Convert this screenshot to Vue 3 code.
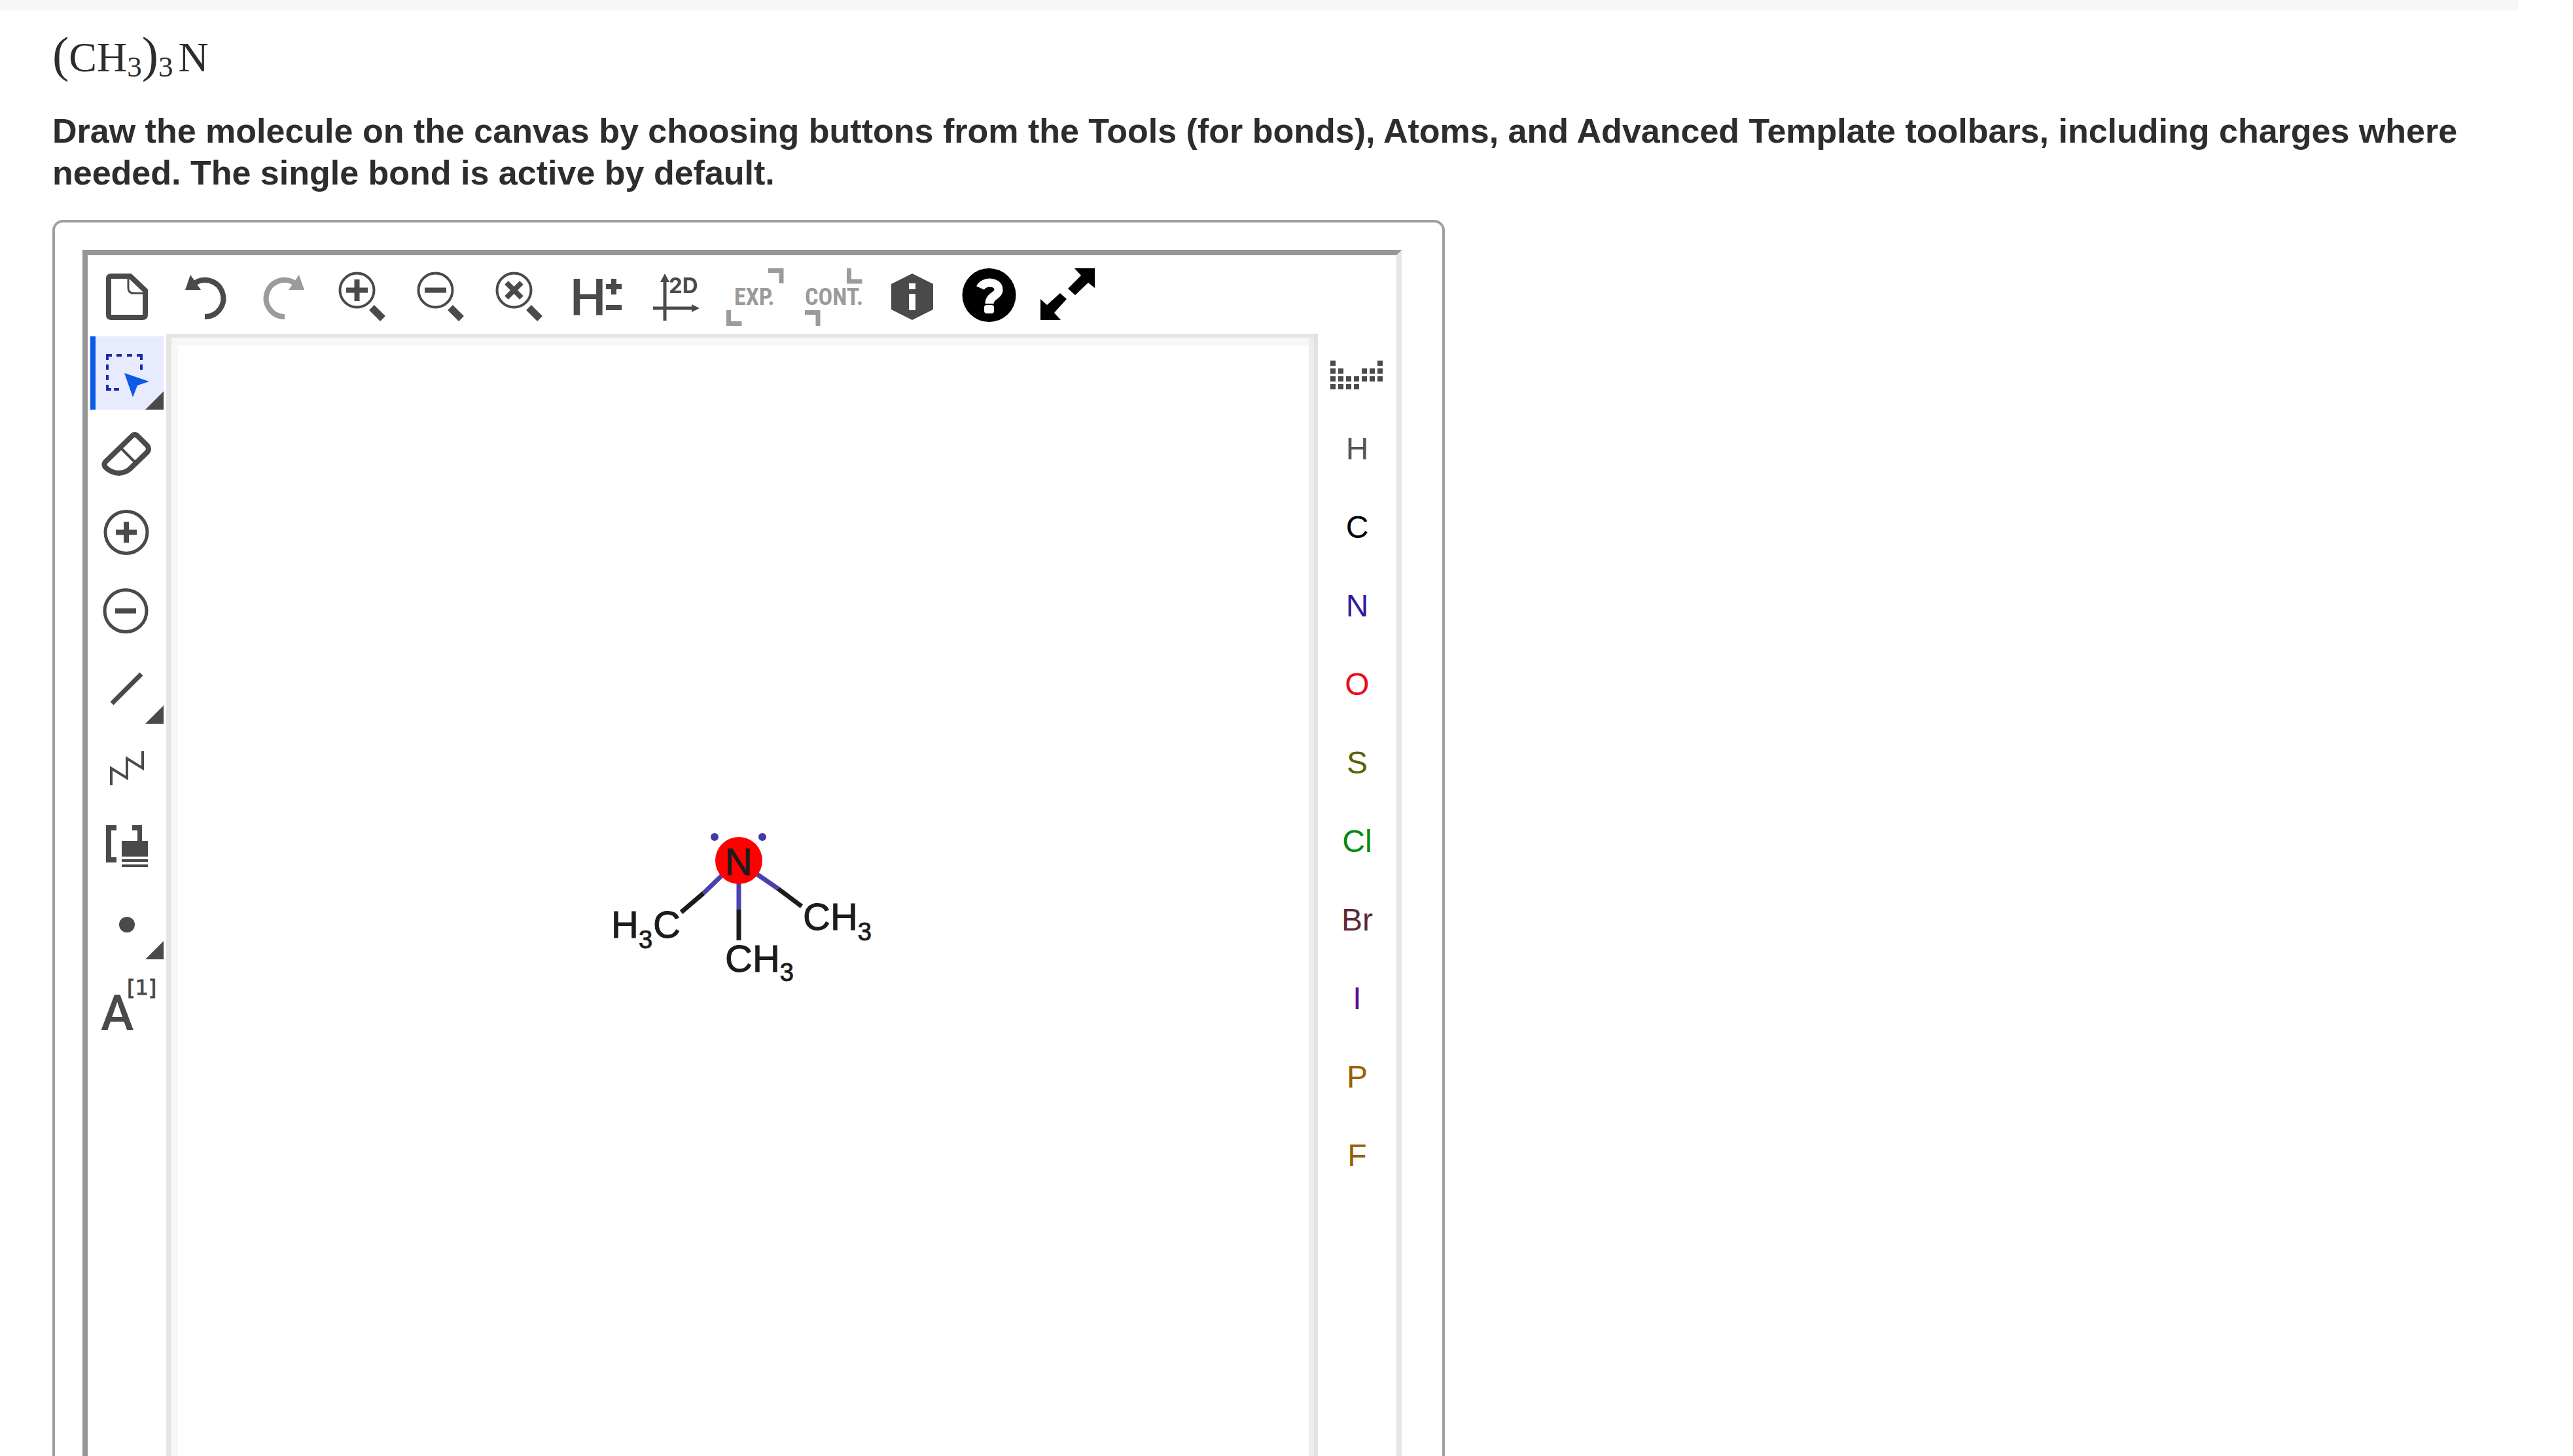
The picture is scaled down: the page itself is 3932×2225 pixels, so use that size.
<script setup>
import { ref } from 'vue'

const activeTool = ref('select')

const atoms = [
  { symbol: 'H', color: '#555555' },
  { symbol: 'C', color: '#000000' },
  { symbol: 'N', color: '#2a1ba5' },
  { symbol: 'O', color: '#e60f1a' },
  { symbol: 'S', color: '#5a6400' },
  { symbol: 'Cl', color: '#008a12' },
  { symbol: 'Br', color: '#5a2a38' },
  { symbol: 'I', color: '#5c0c90' },
  { symbol: 'P', color: '#996300' },
  { symbol: 'F', color: '#946200' }
]

// filled cells of the periodic table icon, row by row
const tableCells = [
  [0, 6],
  [0, 1, 4, 5, 6],
  [0, 1, 2, 3, 4, 5, 6],
  [0, 1, 2, 3]
]
</script>

<template>
  <div class="page">
    <div class="top-strip"></div>

    <main class="question">
      <p class="formula">
        <span class="paren">(</span>CH<sub>3</sub><span class="paren close">)</span><sub>3</sub><span class="last">N</span>
      </p>
      <p class="prompt">
        Draw the molecule on the canvas by choosing buttons from the Tools (for bonds), Atoms, and Advanced Template toolbars, including charges where needed. The single bond is active by default.
      </p>

      <section class="editor">
        <div class="frame">
          <!-- Top toolbar -->
          <div class="toolbar">
            <button type="button" aria-label="New">
              <svg viewBox="0 0 112 112">
                <path class="line" stroke-width="8" d="M32 28h29l23 22v37q0 4-4 4H32q-4 0-4-4V32q0-4 4-4z" />
                <path class="line" stroke-width="3" d="M58 28v18q0 8 8 8h18" />
              </svg>
            </button>
            <button type="button" aria-label="Undo">
              <svg viewBox="0 0 112 112">
                <path class="line" stroke-width="8" d="M38 40A28 28 0 1 1 55 90" />
                <path class="fill" d="M33 26L25 49H49z" />
              </svg>
            </button>
            <button type="button" aria-label="Redo" class="muted">
              <svg viewBox="0 0 112 112">
                <path class="line" stroke-width="8" d="M74 40A28 28 0 1 0 57 90" />
                <path class="fill" d="M79 26L87 49H63z" />
              </svg>
            </button>
            <button type="button" aria-label="Zoom in">
              <svg viewBox="0 0 112 112">
                <circle class="line" stroke-width="4" cx="47.5" cy="49.5" r="26" />
                <path class="line" stroke-width="8" d="M31 49.5h33M47.5 33v33" />
                <path class="line" stroke-width="11" d="M70 76L87 93" />
              </svg>
            </button>
            <button type="button" aria-label="Zoom out">
              <svg viewBox="0 0 112 112">
                <circle class="line" stroke-width="4" cx="47.5" cy="49.5" r="26" />
                <path class="line" stroke-width="8" d="M31 49.5h33" />
                <path class="line" stroke-width="11" d="M70 76L87 93" />
              </svg>
            </button>
            <button type="button" aria-label="Zoom reset">
              <svg viewBox="0 0 112 112">
                <circle class="line" stroke-width="4" cx="47.5" cy="49.5" r="26" />
                <path class="line" stroke-width="8" d="M36 38L59 61M59 38L36 61" />
                <path class="line" stroke-width="11" d="M70 76L87 93" />
              </svg>
            </button>
            <button type="button" aria-label="Toggle hydrogens">
              <svg viewBox="0 0 112 112">
                <text class="icon-text" x="13" y="88" font-size="78" font-weight="500">H</text>
                <path class="line" stroke-width="8" d="M68 44h24M80 32v24M68 76h24" />
              </svg>
            </button>
            <button type="button" aria-label="Clean 2D">
              <svg viewBox="0 0 112 112">
                <path class="line" stroke-width="5" d="M38 34v62M20 77h62" />
                <path class="fill" d="M38 24l7 13H31zM91 77l-12 6V71z" />
                <text class="icon-text inter" x="44" y="54" font-size="33" font-weight="700">2D</text>
              </svg>
            </button>
            <button type="button" aria-label="Expand groups" class="muted">
              <svg viewBox="0 0 112 112">
                <path class="line" stroke-width="7" d="M76 19.5h20V39M15.5 80v20.5h20" />
                <text class="icon-text narrow" x="24" y="72" font-size="36" font-weight="700">EXP.</text>
              </svg>
            </button>
            <button type="button" aria-label="Contract groups" class="muted">
              <svg viewBox="0 0 112 112">
                <path class="line" stroke-width="7" d="M79.5 16v20h20M12 83.5h20V104" />
                <text class="icon-text narrow" x="12" y="72" font-size="36" font-weight="700">CONT.</text>
              </svg>
            </button>
            <button type="button" aria-label="About">
              <svg viewBox="0 0 112 112">
                <path class="fill" d="M56 24L88 40V79L56 95L24 79V40z" />
                <path fill="#ffffff" d="M51 39h10v9H51zM51 55h10v25H51z" />
              </svg>
            </button>
            <button type="button" aria-label="Help">
              <svg viewBox="0 0 112 112">
                <circle cx="53.5" cy="57" r="41" fill="#000000" />
                <path fill="none" stroke="#ffffff" stroke-width="13" d="M40 46C45 35 68 35 68 49C68 58 54 58 54 70" />
                <rect x="46" y="72" width="15" height="13" rx="4" fill="#ffffff" />
              </svg>
            </button>
            <button type="button" aria-label="Fullscreen">
              <svg viewBox="0 0 112 112">
                <path d="M64 16H95V46L85 38L65 57L54 47L74 27z" fill="#000000" />
                <path d="M43 95H12V63L22 72L42 54L52 63L33 84z" fill="#000000" />
              </svg>
            </button>
          </div>

          <div class="workspace">
            <!-- Left toolbar -->
            <div class="side">
              <button type="button" aria-label="Selection" :class="{ active: activeTool === 'select' }" @click="activeTool = 'select'">
                <svg viewBox="0 0 112 112">
                  <path fill="none" stroke="#1b2bb0" stroke-width="4" d="M26 36v-7h7M40 29h8M56 29h8M71 29h7v7M78 43v8M26 43v8M26 59v8M26 74v7h6M36 81h8" />
                  <path fill="#0b5be8" d="M52 56L90 69L72 75L65 93z" />
                  <path class="fill" d="M84 112H112V84z" />
                </svg>
              </button>
              <button type="button" aria-label="Erase" :class="{ active: activeTool === 'erase' }" @click="activeTool = 'erase'">
                <svg viewBox="0 0 112 112">
                  <path class="line" stroke-width="8" d="M64 32L23 72Q20 76 23 80Q32 89 44 89Q54 88 60 83L87 57Q91 52 87 47L73 33Q68 28 64 32z" />
                  <path class="line" stroke-width="4" d="M46 50L69 73" />
                </svg>
              </button>
              <button type="button" aria-label="Increase charge" :class="{ active: activeTool === 'plus' }" @click="activeTool = 'plus'">
                <svg viewBox="0 0 112 112">
                  <circle class="line" stroke-width="5" cx="55" cy="59.5" r="32" />
                  <path class="line" stroke-width="8" d="M39 59.5h32M55 43.5v32" />
                </svg>
              </button>
              <button type="button" aria-label="Decrease charge" :class="{ active: activeTool === 'minus' }" @click="activeTool = 'minus'">
                <svg viewBox="0 0 112 112">
                  <circle class="line" stroke-width="5" cx="54" cy="59.5" r="32" />
                  <path class="line" stroke-width="8" d="M38 59.5h32" />
                </svg>
              </button>
              <button type="button" aria-label="Single bond" :class="{ active: activeTool === 'bond' }" @click="activeTool = 'bond'">
                <svg viewBox="0 0 112 112">
                  <path class="line" stroke-width="7" d="M33 81L78 36" />
                  <path class="fill" d="M84 112H112V84z" />
                </svg>
              </button>
              <button type="button" aria-label="Chain" :class="{ active: activeTool === 'chain' }" @click="activeTool = 'chain'">
                <svg viewBox="0 0 112 112">
                  <path class="line" stroke-width="4" d="M32 86V60L56 75V45L80 60V34" />
                </svg>
              </button>
              <button type="button" aria-label="Group template" :class="{ active: activeTool === 'group' }" @click="activeTool = 'group'">
                <svg viewBox="0 0 112 112">
                  <path class="fill" d="M24 27h16v8h-8v41h8v8H24zM64 27h15v24h9v24H48V51h24V35h-8zM48 79h40v4H48zM48 87h40v4H48z" />
                </svg>
              </button>
              <button type="button" aria-label="Radical" :class="{ active: activeTool === 'radical' }" @click="activeTool = 'radical'">
                <svg viewBox="0 0 112 112">
                  <circle class="fill" cx="56" cy="59" r="12" />
                  <path class="fill" d="M84 112H112V84z" />
                </svg>
              </button>
              <button type="button" aria-label="Atom map" :class="{ active: activeTool === 'map' }" @click="activeTool = 'map'">
                <svg viewBox="0 0 112 112">
                  <text class="icon-text" x="16" y="100" font-size="76" font-weight="500">A</text>
                  <text class="icon-text dejavu" x="56" y="46" font-size="32">[1]</text>
                </svg>
              </button>
            </div>

            <!-- Drawing canvas -->
            <div class="canvas">
              <svg class="molecule" viewBox="0 0 460 290">
                <g fill="none" stroke-width="7">
                  <path stroke="#4b40b0" d="M203 98L175 125M229 108V150M257 96L289 118" />
                  <path stroke="#1c1c1c" d="M175 125L141 154M229 150V197M289 118L325 145" />
                </g>
                <circle cx="229" cy="75" r="36" fill="#ff0000" />
                <circle cx="192" cy="39" r="6" fill="#4438a8" />
                <circle cx="265" cy="39" r="6" fill="#4438a8" />
                <g class="atom-text">
                  <text x="229" y="97" text-anchor="middle">N</text>
                  <text x="34" y="193">H<tspan class="sub" dy="16">3</tspan></text>
                  <text x="98" y="193">C</text>
                  <text x="208" y="245">CH<tspan class="sub" dy="14">3</tspan></text>
                  <text x="327" y="181">CH<tspan class="sub" dy="16">3</tspan></text>
                </g>
              </svg>
            </div>

            <!-- Atoms toolbar -->
            <div class="side">
              <button type="button" aria-label="Periodic table">
                <svg viewBox="0 0 112 112">
                  <template v-for="(row, y) in tableCells" :key="y">
                    <rect v-for="x in row" :key="x" class="fill" :x="15 + x * 12" :y="37 + y * 12" width="8" height="8" />
                  </template>
                </svg>
              </button>
              <button v-for="atom in atoms" :key="atom.symbol" type="button" class="atom" :style="{ color: atom.color }">
                {{ atom.symbol }}
              </button>
            </div>
          </div>
        </div>
      </section>
    </main>
  </div>
</template>

<style>
body {
  margin: 0;
  background: #ffffff;
}
</style>

<style scoped>
.page {
  display: flex;
  flex-direction: column;
  height: 100vh;
  margin-right: 84px;
  overflow: hidden;
  font-family: 'Liberation Sans', Arial, sans-serif;
  color: #2d2d2d;
}

.top-strip {
  flex: none;
  height: 16px;
  background: #f7f7f7;
}

.question {
  display: flex;
  flex-direction: column;
  flex: 1;
  gap: 40px;
  min-height: 0;
  padding: 32px 80px 0;
}

.formula {
  margin: 0;
  font-family: 'Liberation Serif', 'Times New Roman', serif;
  font-size: 64px;
  line-height: 80px;
}

.formula sub {
  font-size: 45px;
  line-height: 0;
  vertical-align: -8px;
}

.paren {
  font-size: 76px;
  line-height: 0;
}

.last {
  margin-left: 8px;
}

.prompt {
  margin: 0;
  font-size: 52px;
  font-weight: 700;
  line-height: 64px;
}

.editor {
  display: flex;
  flex: 1;
  box-sizing: border-box;
  width: 100%;
  max-width: 2128px;
  min-height: 0;
  padding: 42px 62px 0 42px;
  border: 4px solid #a0a0a0;
  border-bottom: 0;
  border-radius: 16px 16px 0 0;
}

.frame {
  display: flex;
  flex-direction: column;
  flex: 1;
  min-width: 0;
  border: 8px solid;
  border-color: #979797 #e6e6e6 #979797 #979797;
  border-bottom: 0;
}

.toolbar {
  display: flex;
  gap: 8px;
  padding: 4px;
}

.workspace {
  display: flex;
  flex: 1;
  min-height: 0;
}

.side {
  display: flex;
  flex-direction: column;
  gap: 8px;
  padding: 4px;
}

button {
  flex: none;
  width: 112px;
  height: 112px;
  padding: 0;
  border: 0;
  background: none;
  font-family: inherit;
  cursor: pointer;
}

button svg {
  display: block;
  width: 112px;
  height: 112px;
  overflow: visible;
}

button.active {
  background: #e8ebfd;
  box-shadow: inset 8px 0 0 #0b5be8;
}

.line {
  fill: none;
  stroke: #4a4a4a;
}

.fill {
  fill: #4a4a4a;
}

.icon-text {
  fill: #4a4a4a;
  font-family: Roboto, sans-serif;
}

.inter {
  font-family: Inter, sans-serif;
}

.narrow {
  font-family: 'Roboto Condensed', 'Liberation Sans Narrow', Roboto, sans-serif;
}

.dejavu {
  font-family: 'DejaVu Sans', sans-serif;
  stroke: #4a4a4a;
  stroke-width: 1;
}

.muted .line {
  stroke: #9b9b9b;
}

.muted .fill,
.muted .icon-text {
  fill: #9b9b9b;
}

.atom {
  padding-bottom: 8px;
  font-size: 48px;
  line-height: 56px;
}

.canvas {
  position: relative;
  flex: 1;
  min-width: 0;
  overflow: hidden;
  box-shadow:
    inset -6px 0 0 #e2e2e2,
    inset 8px 6px 0 #e5e5e5,
    inset -14px 0 0 #ededed,
    inset 18px 18px 0 #f7f7f7;
}

/* the molecule sits freely on the drawing area */
.molecule {
  position: absolute;
  top: 730px;
  left: 646px;
  width: 460px;
  height: 290px;
}

.atom-text {
  fill: #1c1c1c;
  stroke: #1c1c1c;
  stroke-width: 1;
  font-family: 'Liberation Sans', Arial, sans-serif;
  font-size: 58px;
}

.sub {
  font-size: 38px;
}
</style>
